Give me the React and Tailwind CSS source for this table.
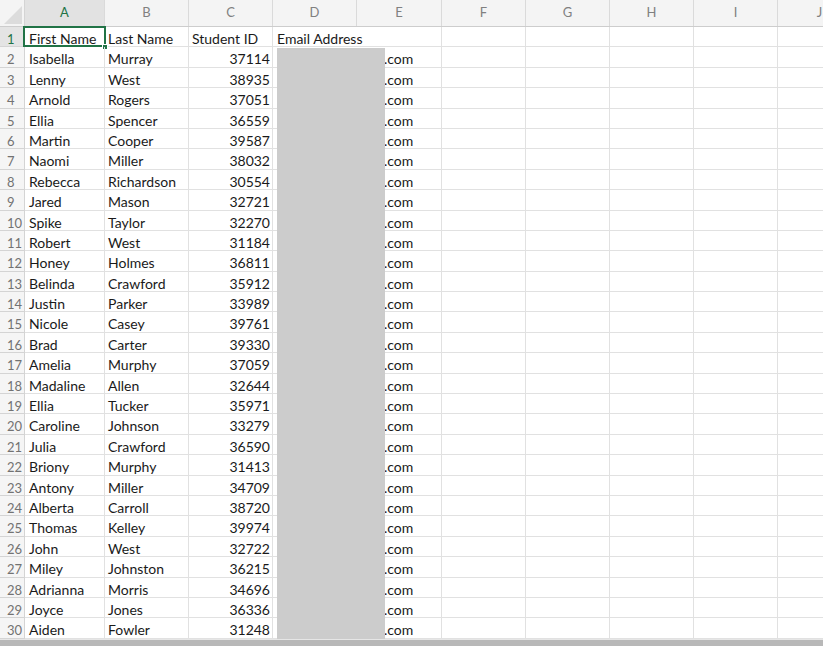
import React from "react";

const rows = [
  ["Isabella", "Murray", "37114"],
  ["Lenny", "West", "38935"],
  ["Arnold", "Rogers", "37051"],
  ["Ellia", "Spencer", "36559"],
  ["Martin", "Cooper", "39587"],
  ["Naomi", "Miller", "38032"],
  ["Rebecca", "Richardson", "30554"],
  ["Jared", "Mason", "32721"],
  ["Spike", "Taylor", "32270"],
  ["Robert", "West", "31184"],
  ["Honey", "Holmes", "36811"],
  ["Belinda", "Crawford", "35912"],
  ["Justin", "Parker", "33989"],
  ["Nicole", "Casey", "39761"],
  ["Brad", "Carter", "39330"],
  ["Amelia", "Murphy", "37059"],
  ["Madaline", "Allen", "32644"],
  ["Ellia", "Tucker", "35971"],
  ["Caroline", "Johnson", "33279"],
  ["Julia", "Crawford", "36590"],
  ["Briony", "Murphy", "31413"],
  ["Antony", "Miller", "34709"],
  ["Alberta", "Carroll", "38720"],
  ["Thomas", "Kelley", "39974"],
  ["John", "West", "32722"],
  ["Miley", "Johnston", "36215"],
  ["Adrianna", "Morris", "34696"],
  ["Joyce", "Jones", "36336"],
  ["Aiden", "Fowler", "31248"],
];

const letters = ["A", "B", "C", "D", "E", "F", "G", "H", "I", "J"];
const widths = [
  "w-[80px]",
  "w-[84px]",
  "w-[84px]",
  "w-[84px]",
  "w-[85px]",
  "w-[84px]",
  "w-[84px]",
  "w-[84px]",
  "w-[84px]",
  "w-[84px]",
];

function Row({ num, a, b, c, d, first }) {
  return (
    <div className="flex h-[20.4px] shrink-0">
      <div
        className={`w-[25px] shrink-0 border-r border-b border-[#d4d4d4] pl-[7px] pt-[2px] leading-[20px] text-[13px] ${
          first ? "bg-[#e4e4e4] text-[#217346]" : "bg-[#f5f5f5] text-[#727272]"
        }`}
      >
        {num}
      </div>
      <div className="relative w-[80px] shrink-0 border-r border-b border-[#e1e1e1] pl-[4px] pt-[2px] leading-[20px] whitespace-nowrap">
        {a}
        {first && (
          <>
            <div className="absolute left-[-2px] top-[-1px] right-[-2px] bottom-[-1px] border-2 border-[#217346]" />
            <div className="absolute right-[-4px] bottom-[-4px] w-[6px] h-[6px] bg-[#217346] border border-white" />
          </>
        )}
      </div>
      <div className="w-[84px] shrink-0 border-r border-b border-[#e1e1e1] pl-[3px] pt-[2px] leading-[20px] whitespace-nowrap">
        {b}
      </div>
      <div
        className={`w-[84px] shrink-0 border-r border-b border-[#e1e1e1] pt-[2px] leading-[20px] whitespace-nowrap ${
          first ? "pl-[3px]" : "text-right pr-[2px]"
        }`}
      >
        {c}
      </div>
      <div className="w-[84px] shrink-0 border-b border-[#e1e1e1] pl-[4px] pt-[2px] leading-[20px] whitespace-nowrap relative z-10">
        {first ? d : <span className="absolute left-[111px] top-[2px]">.com</span>}
      </div>
      {widths.slice(4).map((w, i) => (
        <div key={i} className={`${w} shrink-0 border-r border-b border-[#e1e1e1]`} />
      ))}
    </div>
  );
}

export default function App() {
  return (
    <div
      className="w-[823px] h-[646px] overflow-hidden bg-white flex flex-col text-[14px] text-[#1a1a1a]"
      style={{ fontFamily: "Lato, 'Open Sans', sans-serif" }}
    >
      {/* header */}
      <div className="flex h-[27px] shrink-0 bg-[#f4f4f4] border-b border-[#cdcdcd]">
        <div className="relative w-[25px] shrink-0 border-r border-[#d4d4d4]">
          <div className="absolute right-[2px] bottom-[2px] w-0 h-0 border-l-[18px] border-l-transparent border-b-[18px] border-b-[#dcdcdc]" />
        </div>
        {letters.map((l, i) => (
          <div
            key={l}
            className={`${widths[i]} shrink-0 border-r border-[#dadada] flex items-center justify-center text-[13px] ${
              i === 0 ? "bg-[#e2e2e2] text-[#217346]" : "text-[#808080]"
            }`}
          >
            {l}
          </div>
        ))}
      </div>
      <div className="relative flex flex-col shrink-0">
        <Row num={1} a="First Name" b="Last Name" c="Student ID" d="Email Address" first />
        {rows.map((r, i) => (
          <Row key={i} num={i + 2} a={r[0]} b={r[1]} c={r[2]} />
        ))}
        <div className="absolute left-[277px] top-[21px] w-[108px] bottom-0 bg-[#cccccc] z-20" />
      </div>
      <div className="flex-1 border-t border-[#e6e6e6] bg-[#b8b8b8]" />
    </div>
  );
}
